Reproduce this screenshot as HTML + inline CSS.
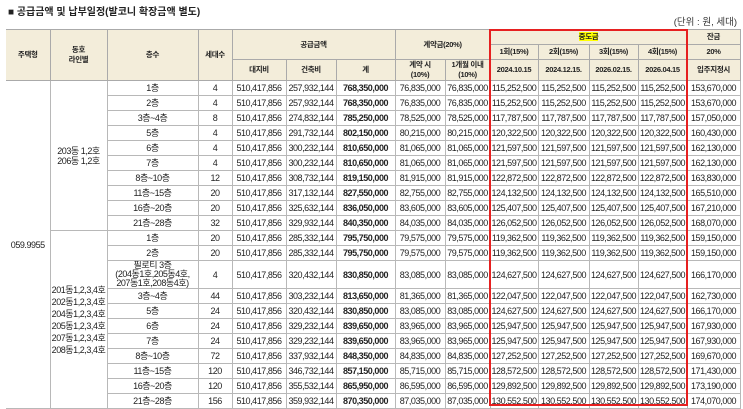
<!DOCTYPE html>
<html><head><meta charset="utf-8"><style>
body{margin:0;background:#fff;font-family:"Liberation Sans","Noto Sans CJK KR",sans-serif;color:#222;width:743px;height:409px;overflow:hidden;position:relative}
.t{position:absolute;left:8px;top:3px;font-size:10px;font-weight:bold}
.u{position:absolute;right:6px;top:14px;font-size:9.5px;color:#333}
table{position:absolute;left:6px;top:29px;width:734px;border-collapse:collapse;table-layout:fixed;font-size:9px;letter-spacing:-0.45px}
td{border:1px solid #b8b8b8;text-align:center;padding:0;height:14px;white-space:nowrap;overflow:hidden;line-height:10px}
thead td{background:#f3edda;font-weight:bold;font-size:7.5px;border-color:#aaa;letter-spacing:-0.3px}
td.b{font-weight:bold}
td.n{border-left:none}
.hl{background:#ffff00}
.red{position:absolute;left:489px;top:29px;width:195px;height:373px;border:2px solid #e62020}
</style></head><body>
<div class="t">■ 공급금액 및 납부일정(발코니 확장금액 별도)</div>
<div class="u">(단위 : 원, 세대)</div>
<table>
<colgroup><col style="width:44px"><col style="width:57px"><col style="width:91px"><col style="width:34px"><col style="width:54px"><col style="width:50px"><col style="width:59px"><col style="width:50px"><col style="width:45px"><col style="width:48px"><col style="width:51px"><col style="width:49px"><col style="width:49px"><col style="width:53px"></colgroup>
<thead>
<tr style="height:15px"><td rowspan="3" class="n">주택형</td><td rowspan="3">동호<br>라인별</td><td rowspan="3">층수</td><td rowspan="3">세대수</td><td colspan="3" rowspan="2">공급금액</td><td colspan="2" rowspan="2">계약금(20%)</td><td colspan="4"><span class="hl">중도금</span></td><td>잔금</td></tr>
<tr style="height:15px"><td>1회(15%)</td><td>2회(15%)</td><td>3회(15%)</td><td>4회(15%)</td><td>20%</td></tr>
<tr style="height:20px"><td>대지비</td><td>건축비</td><td>계</td><td>계약 시<br>(10%)</td><td>1개월 이내<br>(10%)</td><td>2024.10.15</td><td>2024.12.15.</td><td>2026.02.15.</td><td>2026.04.15</td><td>입주지정시</td></tr>
</thead>
<tbody>
<tr style="height:15px"><td rowspan="21" class="n" style="vertical-align:middle">059.9955</td><td rowspan="10">203동 1,2호<br>206동 1,2호</td><td>1층</td><td>4</td><td>510,417,856</td><td>257,932,144</td><td class="b">768,350,000</td><td>76,835,000</td><td>76,835,000</td><td>115,252,500</td><td>115,252,500</td><td>115,252,500</td><td>115,252,500</td><td>153,670,000</td></tr>
<tr style="height:15px"><td>2층</td><td>4</td><td>510,417,856</td><td>257,932,144</td><td class="b">768,350,000</td><td>76,835,000</td><td>76,835,000</td><td>115,252,500</td><td>115,252,500</td><td>115,252,500</td><td>115,252,500</td><td>153,670,000</td></tr>
<tr style="height:15px"><td>3층~4층</td><td>8</td><td>510,417,856</td><td>274,832,144</td><td class="b">785,250,000</td><td>78,525,000</td><td>78,525,000</td><td>117,787,500</td><td>117,787,500</td><td>117,787,500</td><td>117,787,500</td><td>157,050,000</td></tr>
<tr style="height:15px"><td>5층</td><td>4</td><td>510,417,856</td><td>291,732,144</td><td class="b">802,150,000</td><td>80,215,000</td><td>80,215,000</td><td>120,322,500</td><td>120,322,500</td><td>120,322,500</td><td>120,322,500</td><td>160,430,000</td></tr>
<tr style="height:15px"><td>6층</td><td>4</td><td>510,417,856</td><td>300,232,144</td><td class="b">810,650,000</td><td>81,065,000</td><td>81,065,000</td><td>121,597,500</td><td>121,597,500</td><td>121,597,500</td><td>121,597,500</td><td>162,130,000</td></tr>
<tr style="height:15px"><td>7층</td><td>4</td><td>510,417,856</td><td>300,232,144</td><td class="b">810,650,000</td><td>81,065,000</td><td>81,065,000</td><td>121,597,500</td><td>121,597,500</td><td>121,597,500</td><td>121,597,500</td><td>162,130,000</td></tr>
<tr style="height:15px"><td>8층~10층</td><td>12</td><td>510,417,856</td><td>308,732,144</td><td class="b">819,150,000</td><td>81,915,000</td><td>81,915,000</td><td>122,872,500</td><td>122,872,500</td><td>122,872,500</td><td>122,872,500</td><td>163,830,000</td></tr>
<tr style="height:15px"><td>11층~15층</td><td>20</td><td>510,417,856</td><td>317,132,144</td><td class="b">827,550,000</td><td>82,755,000</td><td>82,755,000</td><td>124,132,500</td><td>124,132,500</td><td>124,132,500</td><td>124,132,500</td><td>165,510,000</td></tr>
<tr style="height:15px"><td>16층~20층</td><td>20</td><td>510,417,856</td><td>325,632,144</td><td class="b">836,050,000</td><td>83,605,000</td><td>83,605,000</td><td>125,407,500</td><td>125,407,500</td><td>125,407,500</td><td>125,407,500</td><td>167,210,000</td></tr>
<tr style="height:15px"><td>21층~28층</td><td>32</td><td>510,417,856</td><td>329,932,144</td><td class="b">840,350,000</td><td>84,035,000</td><td>84,035,000</td><td>126,052,500</td><td>126,052,500</td><td>126,052,500</td><td>126,052,500</td><td>168,070,000</td></tr>
<tr style="height:15px"><td rowspan="11" style="line-height:12px">201동1,2,3,4호<br>202동1,2,3,4호<br>204동1,2,3,4호<br>205동1,2,3,4호<br>207동1,2,3,4호<br>208동1,2,3,4호</td><td>1층</td><td>20</td><td>510,417,856</td><td>285,332,144</td><td class="b">795,750,000</td><td>79,575,000</td><td>79,575,000</td><td>119,362,500</td><td>119,362,500</td><td>119,362,500</td><td>119,362,500</td><td>159,150,000</td></tr>
<tr style="height:15px"><td>2층</td><td>20</td><td>510,417,856</td><td>285,332,144</td><td class="b">795,750,000</td><td>79,575,000</td><td>79,575,000</td><td>119,362,500</td><td>119,362,500</td><td>119,362,500</td><td>119,362,500</td><td>159,150,000</td></tr>
<tr style="height:28px"><td style="line-height:9px">필로티 3층<br>(204동1호,205동4호,<br>207동1호,208동4호)</td><td>4</td><td>510,417,856</td><td>320,432,144</td><td class="b">830,850,000</td><td>83,085,000</td><td>83,085,000</td><td>124,627,500</td><td>124,627,500</td><td>124,627,500</td><td>124,627,500</td><td>166,170,000</td></tr>
<tr style="height:15px"><td>3층~4층</td><td>44</td><td>510,417,856</td><td>303,232,144</td><td class="b">813,650,000</td><td>81,365,000</td><td>81,365,000</td><td>122,047,500</td><td>122,047,500</td><td>122,047,500</td><td>122,047,500</td><td>162,730,000</td></tr>
<tr style="height:15px"><td>5층</td><td>24</td><td>510,417,856</td><td>320,432,144</td><td class="b">830,850,000</td><td>83,085,000</td><td>83,085,000</td><td>124,627,500</td><td>124,627,500</td><td>124,627,500</td><td>124,627,500</td><td>166,170,000</td></tr>
<tr style="height:15px"><td>6층</td><td>24</td><td>510,417,856</td><td>329,232,144</td><td class="b">839,650,000</td><td>83,965,000</td><td>83,965,000</td><td>125,947,500</td><td>125,947,500</td><td>125,947,500</td><td>125,947,500</td><td>167,930,000</td></tr>
<tr style="height:15px"><td>7층</td><td>24</td><td>510,417,856</td><td>329,232,144</td><td class="b">839,650,000</td><td>83,965,000</td><td>83,965,000</td><td>125,947,500</td><td>125,947,500</td><td>125,947,500</td><td>125,947,500</td><td>167,930,000</td></tr>
<tr style="height:15px"><td>8층~10층</td><td>72</td><td>510,417,856</td><td>337,932,144</td><td class="b">848,350,000</td><td>84,835,000</td><td>84,835,000</td><td>127,252,500</td><td>127,252,500</td><td>127,252,500</td><td>127,252,500</td><td>169,670,000</td></tr>
<tr style="height:15px"><td>11층~15층</td><td>120</td><td>510,417,856</td><td>346,732,144</td><td class="b">857,150,000</td><td>85,715,000</td><td>85,715,000</td><td>128,572,500</td><td>128,572,500</td><td>128,572,500</td><td>128,572,500</td><td>171,430,000</td></tr>
<tr style="height:15px"><td>16층~20층</td><td>120</td><td>510,417,856</td><td>355,532,144</td><td class="b">865,950,000</td><td>86,595,000</td><td>86,595,000</td><td>129,892,500</td><td>129,892,500</td><td>129,892,500</td><td>129,892,500</td><td>173,190,000</td></tr>
<tr style="height:15px"><td>21층~28층</td><td>156</td><td>510,417,856</td><td>359,932,144</td><td class="b">870,350,000</td><td>87,035,000</td><td>87,035,000</td><td>130,552,500</td><td>130,552,500</td><td>130,552,500</td><td>130,552,500</td><td>174,070,000</td></tr>
</tbody></table>
<div class="red"></div>
</body></html>
